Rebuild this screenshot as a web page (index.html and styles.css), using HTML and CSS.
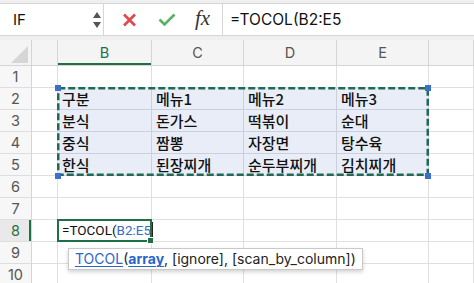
FILE: index.html
```html
<!DOCTYPE html>
<html lang="ko">
<head>
    <meta charset="UTF-8">
    <meta name="viewport" content="width=device-width, initial-scale=1.0">
    <title>TOCOL</title>
    <link rel="stylesheet" href="styles.css">
</head>
<body>

    <div class="top">
        <div class="toolbar">
            <div class="namebox">
                <span class="name">IF</span>
                <svg class="spin" width="8" height="20" viewBox="0 0 8 20"><path d="M4 2 L8 8 L0 8 Z"/><path d="M0 12 L8 12 L4 18 Z"/></svg>
            </div>
            <div class="actions">
                <svg class="cancel" width="15" height="14" viewBox="0 0 15 14"><path d="M2 1.5 L13 12.5 M13 1.5 L2 12.5"/></svg>
                <svg class="enter" width="18" height="14" viewBox="0 0 18 14"><path d="M1.5 6.5 L6.5 11.5 L16.5 1.5"/></svg>
                <span class="fx">fx</span>
            </div>
            <div class="formula">=TOCOL(B2:E5</div>
        </div>
    </div>

    <div class="sheet">
        <!-- encabezados de columna -->
        <div class="corner"><svg width="32" height="25" viewBox="0 0 32 25"><path d="M28 6 L28 23 L11 23 Z"/></svg></div>
        <div class="ch"></div>
        <div class="ch on">B</div>
        <div class="ch">C</div>
        <div class="ch">D</div>
        <div class="ch">E</div>
        <div class="ch"></div>

        <div class="rh">1</div><div class="c"></div><div class="c"></div><div class="c"></div><div class="c"></div><div class="c"></div><div class="c"></div>
        <div class="rh">2</div><div class="c"></div><div class="c r">구분</div><div class="c r">메뉴1</div><div class="c r">메뉴2</div><div class="c r">메뉴3</div><div class="c"></div>
        <div class="rh">3</div><div class="c"></div><div class="c r">분식</div><div class="c r">돈가스</div><div class="c r">떡볶이</div><div class="c r">순대</div><div class="c"></div>
        <div class="rh">4</div><div class="c"></div><div class="c r">중식</div><div class="c r">짬뽕</div><div class="c r">자장면</div><div class="c r">탕수육</div><div class="c"></div>
        <div class="rh">5</div><div class="c"></div><div class="c r">한식</div><div class="c r">된장찌개</div><div class="c r">순두부찌개</div><div class="c r">김치찌개</div><div class="c"></div>
        <div class="rh">6</div><div class="c"></div><div class="c"></div><div class="c"></div><div class="c"></div><div class="c"></div><div class="c"></div>
        <div class="rh">7</div><div class="c"></div><div class="c"></div><div class="c"></div><div class="c"></div><div class="c"></div><div class="c"></div>
        <div class="rh on">8</div><div class="c"></div><div class="c act"><span class="ref-text">=TOCOL(</span><span class="ref">B2:E5</span><span class="caret"></span></div><div class="c"></div><div class="c"></div><div class="c"></div><div class="c"></div>
        <div class="rh">9</div><div class="c"></div><div class="c"></div><div class="c"></div><div class="c"></div><div class="c"></div><div class="c"></div>
        <div class="rh">10</div><div class="c"></div><div class="c"></div><div class="c"></div><div class="c"></div><div class="c"></div><div class="c"></div>

        <!-- rango copiado B2:E5 -->
        <svg class="marquee" width="372" height="89" viewBox="0 0 372 89">
            <rect class="ants" x="1.25" y="1.25" width="369.5" height="86.5"/>
            <rect class="knob" x="-2" y="-2" width="6" height="6"/>
            <rect class="knob" x="368" y="-2" width="6" height="6"/>
            <rect class="knob" x="-2" y="86" width="6" height="6"/>
            <rect class="knob" x="368" y="86" width="6" height="6"/>
        </svg>

        <div class="tip"><u class="fn">TOCOL</u>(<u class="arg">array</u>, [ignore], [scan_by_column])</div>
    </div>

</body>
</html>
```

FILE: styles.css
```css
/* hoja de cálculo */
body {
    margin: 0;
    background: #fff;
    font-family: Inter, "Noto Sans CJK KR", sans-serif;
    color: #111;
    overflow: hidden;
}

/* barra de fórmulas */
.top {
    background: #efefef;
    padding: 3px 0 4px;
}
.toolbar {
    display: flex;
    height: 31px;
    background: #fff;
    border-top: 1px solid #d6d6d6;
    border-bottom: 1px solid #d6d6d6;
}
.namebox {
    width: 104px;
    box-sizing: border-box;
    border-right: 1px solid #d6d6d6;
    display: flex;
    align-items: center;
    justify-content: space-between;
    padding: 0 2px 0 13px;
}
.name {
    font-size: 15px;
}
.spin path {
    fill: #555;
}
.actions {
    width: 118px;
    border-right: 1px solid #d6d6d6;
    display: flex;
    align-items: center;
}
.cancel {
    margin-left: 18px;
}
.cancel path {
    stroke: #e0494b;
    stroke-width: 2.6;
    fill: none;
}
.enter {
    margin-left: 21px;
}
.enter path {
    stroke: #5bb162;
    stroke-width: 2.6;
    fill: none;
}
.fx {
    margin-left: 19px;
    margin-top: -3px;
    font-family: "Liberation Serif", serif;
    font-style: italic;
    font-size: 21px;
    line-height: 1;
    color: #333;
}
.formula {
    flex: 1;
    padding-left: 7px;
    font-size: 15.5px;
    line-height: 31px;
}

/* cuadrícula */
.sheet {
    position: relative;
    display: grid;
    grid-template-columns: 32px 26px 94px 92px 93px 92px 1fr;
    grid-template-rows: 26px repeat(10, 22px);
}
.corner {
    background: #f4f4f4;
    border-right: 1px solid #d5d5d5;
    border-bottom: 1px solid #d5d5d5;
}
.corner path {
    fill: #d6d6d6;
}
.ch {
    background: #f4f4f4;
    border-right: 1px solid #d5d5d5;
    border-bottom: 1px solid #d5d5d5;
    text-align: center;
    font-size: 14.5px;
    line-height: 25px;
    color: #555;
}
.ch.on {
    color: #1e7145;
    box-shadow: inset 0 -2px 0 #1e7145;
}
.rh {
    background: #f7f7f7;
    border-right: 1px solid #d5d5d5;
    border-bottom: 1px solid #dedede;
    text-align: center;
    font-size: 14.5px;
    line-height: 21px;
    color: #555;
}
.rh.on {
    background: #e9e9e9;
    color: #1e7145;
    box-shadow: inset -2px 0 0 #1e7145;
}
.c {
    border-right: 1px solid #e0e0e0;
    border-bottom: 1px solid #e0e0e0;
    padding-left: 4px;
    font-family: "Noto Sans CJK KR", sans-serif;
    font-weight: 500;
    font-size: 15px;
    line-height: 21px;
    white-space: nowrap;
    overflow: hidden;
}
.c.r {
    background: #e8edf7;
    border-color: #c9d0dc;
}

/* celda activa en edición */
.c.act {
    position: relative;
    overflow: visible;
    margin: -1px 0 0 -1px;
    border: 2px solid #1e7145;
    padding-left: 3px;
    font-family: Roboto, sans-serif;
    font-weight: 400;
    font-size: 13.5px;
    line-height: 19px;
}
.c.act::after {
    content: "";
    position: absolute;
    right: -4px;
    bottom: -4px;
    width: 5px;
    height: 5px;
    background: #1e7145;
    border: 1px solid #fff;
}
.ref {
    color: #3a6dbf;
}
.caret {
    display: inline-block;
    width: 1px;
    height: 15px;
    background: #222;
    vertical-align: -2px;
    margin-left: 1px;
}

/* borde punteado del rango, encima de las celdas */
.marquee {
    position: absolute;
    left: 57px;
    top: 47px;
    overflow: visible;
    pointer-events: none;
}
.ants {
    fill: none;
    stroke: #1f6a52;
    stroke-width: 2.5;
    stroke-dasharray: 7 3;
}
.knob {
    fill: #3b6fc9;
}

/* ayuda de la función */
.tip {
    position: absolute;
    left: 68px;
    top: 208px;
    height: 22px;
    box-sizing: border-box;
    padding: 0 6px;
    background: #fff;
    border: 1px solid #c9c9c9;
    box-shadow: 0 2px 4px rgba(0, 0, 0, 0.18);
    font-size: 14px;
    line-height: 20px;
    color: #222;
    white-space: nowrap;
}
.tip u {
    color: #2a66c8;
    text-decoration-thickness: 1px;
    text-underline-offset: 2px;
}
.tip .arg {
    font-weight: 700;
}
```
